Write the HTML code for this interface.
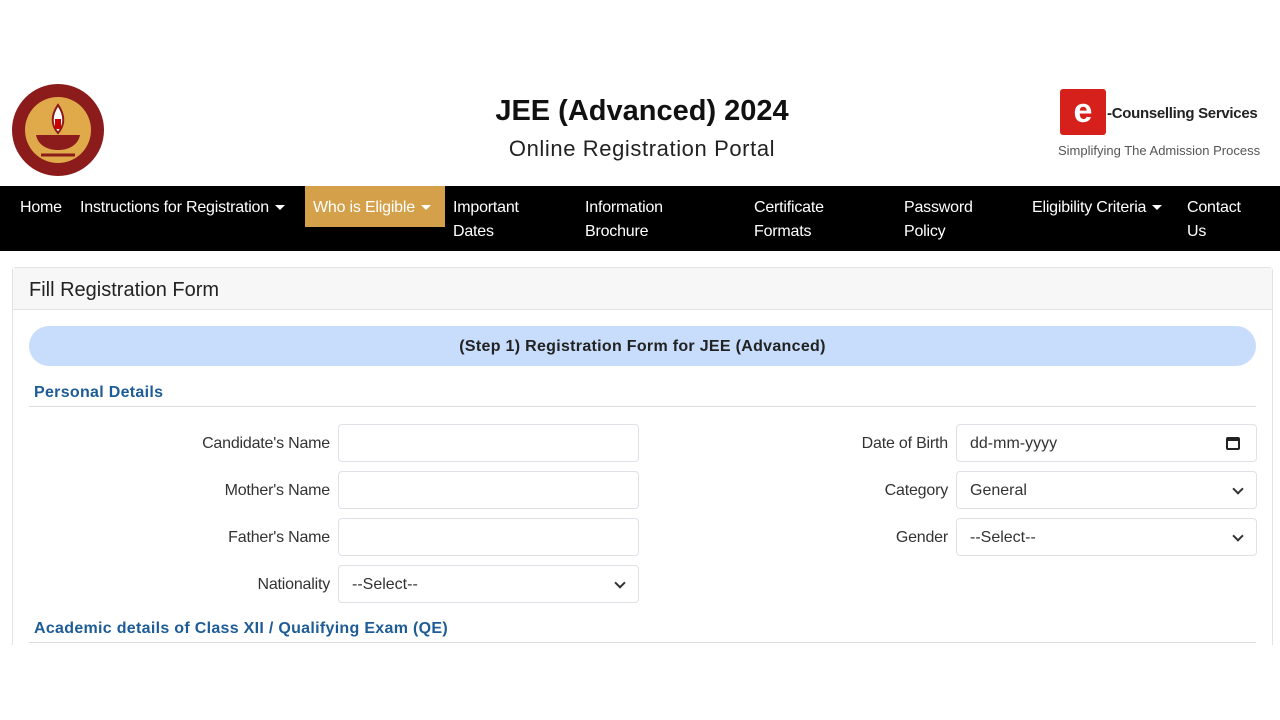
<!DOCTYPE html>
<html><head><meta charset="utf-8"><style>
*{box-sizing:border-box;margin:0;padding:0}
body{width:1280px;height:720px;background:#fff;font-family:"Liberation Sans",sans-serif;position:relative;overflow:hidden;color:#212529}
.a{position:absolute}
.nav{left:0;top:186px;width:1280px;height:65px;background:#000}
.nav div{position:absolute;color:#fff;font-size:16px;line-height:24px;letter-spacing:-.2px}
.caret{display:inline-block;width:0;height:0;border-left:5px solid transparent;border-right:5px solid transparent;border-top:5px solid #fff;vertical-align:middle;margin-left:6px}
.lbl{font-size:16px;color:#333;text-align:right;width:200px;letter-spacing:-.2px}
.inp{border:1px solid #dee2e6;border-radius:4px;height:38px;width:301px;font-size:16px;color:#333;padding:9px 13px;line-height:20px;background:#fff}
.chev{position:absolute;right:14px;top:13px;width:8px;height:8px;border-right:2px solid #333;border-bottom:2px solid #333;transform:rotate(45deg)}
.h{color:#1d5c96;font-weight:bold;font-size:16px;letter-spacing:.3px}
</style></head><body>
<svg class="a" style="left:11px;top:83px" width="94" height="94" viewBox="0 0 94 94">
<circle cx="47" cy="47" r="46" fill="#8c1c1c"/><circle cx="47" cy="47" r="33" fill="#e0a94a"/>
<path d="M47 22 C40 32 40 42 47 50 C54 42 54 32 47 22Z" fill="#fff" stroke="#8c1c1c" stroke-width="2"/>
<rect x="44" y="36" width="6" height="10" fill="#c00"/>
<path d="M25 52 H69 C67 62 58 67 47 67 C36 67 27 62 25 52Z" fill="#8c1c1c"/>
<path d="M30 72 H64" stroke="#8c1c1c" stroke-width="3"/></svg>
<div class="a" style="left:0;width:1284px;top:95px;text-align:center;font-size:29px;font-weight:bold;color:#111">JEE (Advanced) 2024</div>
<div class="a" style="left:0;width:1284px;top:136px;text-align:center;font-size:22px;color:#222;letter-spacing:.6px">Online Registration Portal</div>
<div class="a" style="left:1060px;top:89px;width:46px;height:46px;background:#d6201c;border-radius:3px;color:#fff;font-size:34px;font-weight:bold;text-align:center;line-height:44px">e</div>
<div class="a" style="left:1107px;top:105px;font-size:15px;font-weight:bold;color:#222;letter-spacing:-.3px">-Counselling Services</div>
<div class="a" style="left:1058px;top:143px;font-size:13px;color:#555">Simplifying The Admission Process</div>
<div class="a nav">
<div style="left:20px;top:10px">Home</div>
<div style="left:80px;top:10px">Instructions for Registration<span class="caret"></span></div>
<div style="left:305px;top:0;width:140px;height:41px;background:#d4a14a;padding:10px 8px">Who is Eligible<span class="caret"></span></div>
<div style="left:453px;top:10px">Important<br>Dates</div>
<div style="left:585px;top:10px">Information<br>Brochure</div>
<div style="left:754px;top:10px">Certificate<br>Formats</div>
<div style="left:904px;top:10px">Password<br>Policy</div>
<div style="left:1032px;top:10px">Eligibility Criteria<span class="caret"></span></div>
<div style="left:1187px;top:10px">Contact<br>Us</div>
</div>
<div class="a" style="left:12px;top:267px;width:1261px;height:400px;border:1px solid #e3e3e3;border-radius:4px"></div>
<div class="a" style="left:13px;top:268px;width:1259px;height:42px;background:#f7f7f7;border-bottom:1px solid #e3e3e3"></div>
<div class="a" style="left:29px;top:279px;font-size:20px;color:#222">Fill Registration Form</div>
<div class="a" style="left:29px;top:326px;width:1227px;height:40px;background:#c7ddfb;border-radius:20px;text-align:center;font-size:16px;font-weight:bold;line-height:42px;color:#222;letter-spacing:.3px">(Step 1) Registration Form for JEE (Advanced)</div>
<div class="a h" style="left:34px;top:384px">Personal Details</div>
<div class="a" style="left:29px;top:406px;width:1227px;height:1px;background:#ddd"></div>
<div class="a lbl" style="left:130px;top:435px">Candidate's Name</div>
<div class="a lbl" style="left:130px;top:482px">Mother's Name</div>
<div class="a lbl" style="left:130px;top:529px">Father's Name</div>
<div class="a lbl" style="left:130px;top:576px">Nationality</div>
<div class="a inp" style="left:338px;top:424px"></div>
<div class="a inp" style="left:338px;top:471px"></div>
<div class="a inp" style="left:338px;top:518px"></div>
<div class="a inp" style="left:338px;top:565px">--Select--<span class="chev"></span></div>
<div class="a lbl" style="left:748px;top:435px">Date of Birth</div>
<div class="a lbl" style="left:748px;top:482px">Category</div>
<div class="a lbl" style="left:748px;top:529px">Gender</div>
<div class="a inp" style="left:956px;top:424px">dd-mm-yyyy<span class="a" style="right:16px;top:12px;width:14px;height:13px;border:2px solid #222;border-top-width:4px;border-radius:2px"></span></div>
<div class="a inp" style="left:956px;top:471px">General<span class="chev"></span></div>
<div class="a inp" style="left:956px;top:518px">--Select--<span class="chev"></span></div>
<div class="a h" style="left:34px;top:620px">Academic details of Class XII / Qualifying Exam (QE)</div>
<div class="a" style="left:29px;top:642px;width:1227px;height:1px;background:#ddd"></div>
<div class="a" style="left:0;top:645px;width:1280px;height:75px;background:#fff"></div>
</body></html>
